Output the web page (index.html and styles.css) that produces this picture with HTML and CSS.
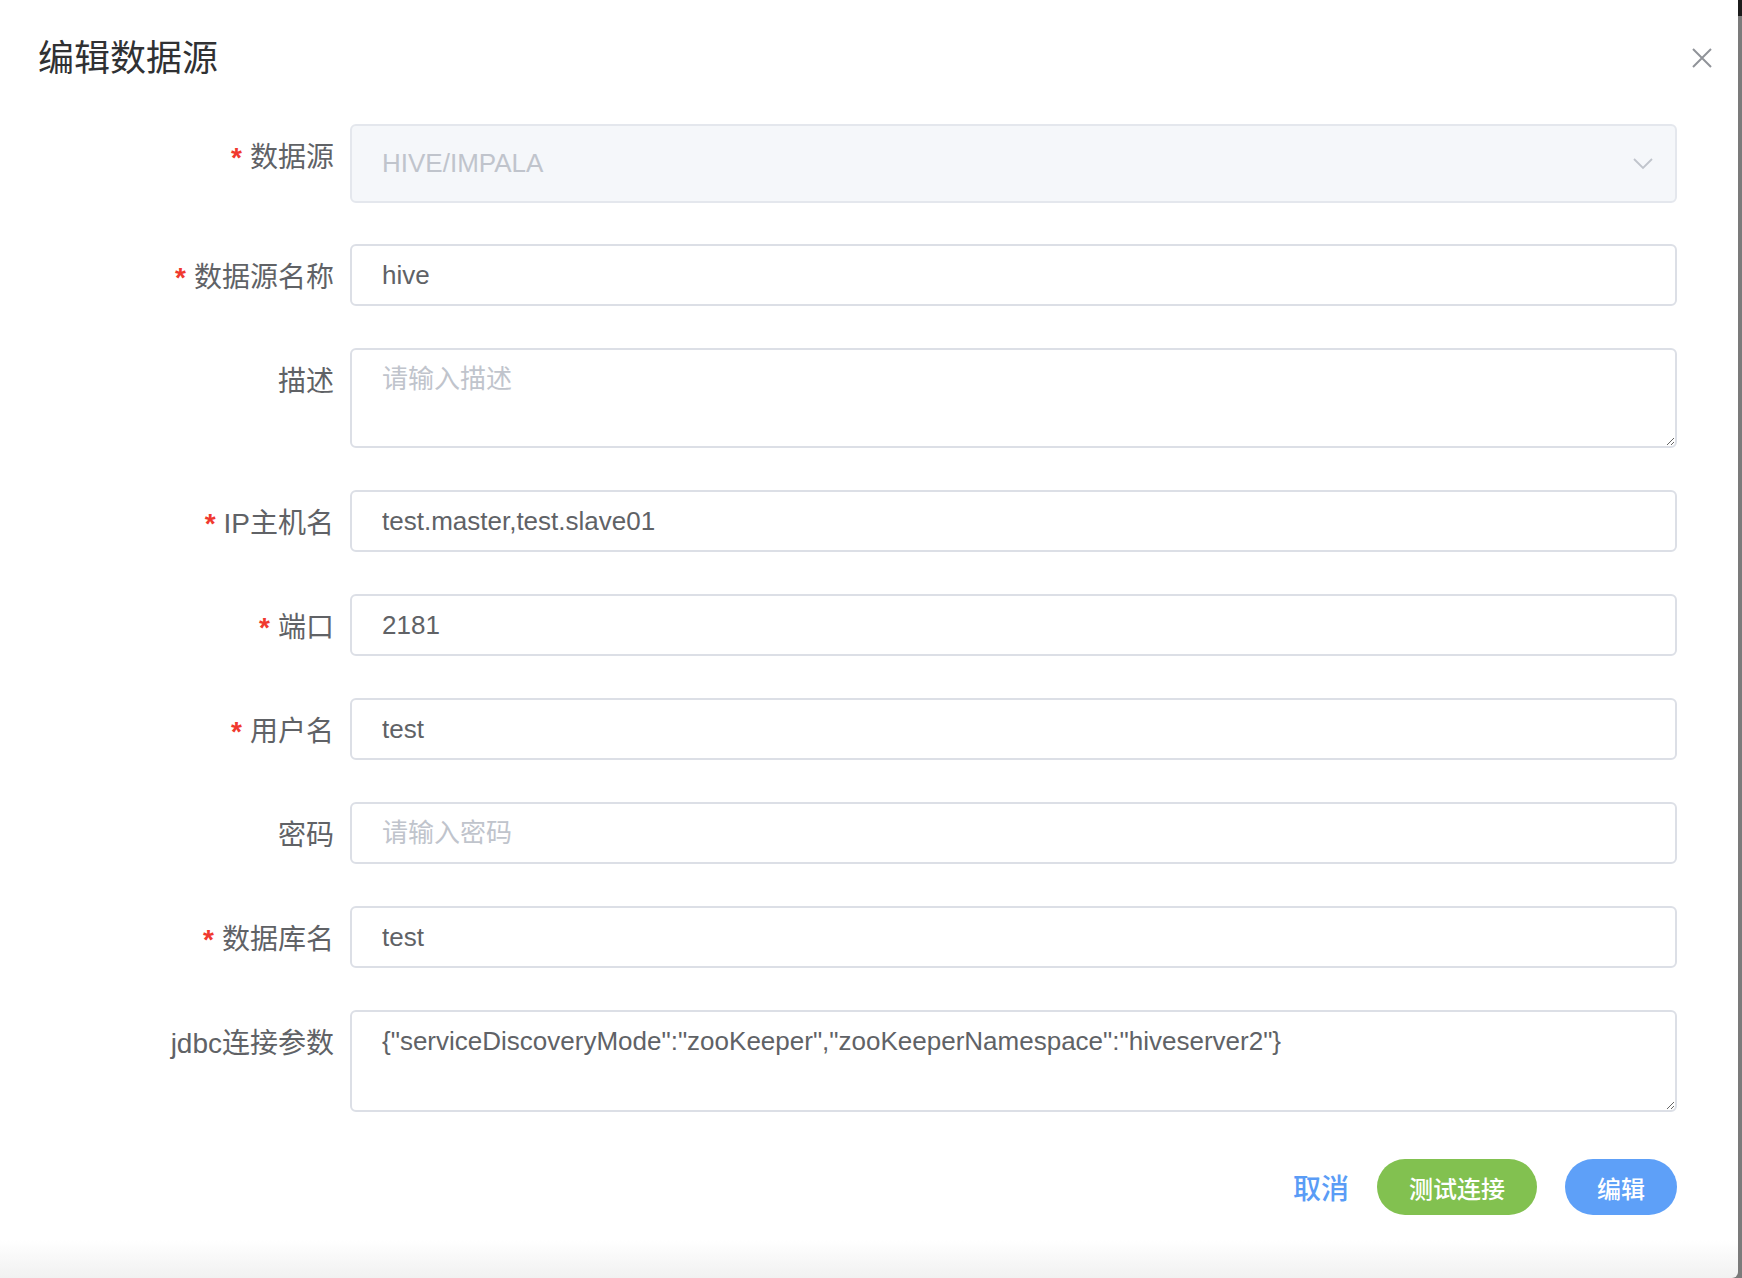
FILE: index.html
```html
<!DOCTYPE html>
<html lang="zh-CN">
<head>
<meta charset="utf-8">
<title>编辑数据源</title>
<link rel="stylesheet" href="styles.css">
</head>
<body>
<div class="page">
  <div class="dialog">
    <div class="dialog-header">
      <span class="dialog-title">编辑数据源</span>
      <button class="dialog-close" type="button" aria-label="关闭">
        <svg viewBox="0 0 20 20" width="20" height="20"><path d="M1 1 L19 19 M19 1 L1 19" fill="none" stroke="#909399" stroke-width="2"/></svg>
      </button>
    </div>
    <form class="form">
      <div class="form-item is-required">
        <label class="form-label">数据源</label>
        <div class="form-content">
          <div class="select is-disabled">
            <span class="select-value">HIVE/IMPALA</span>
            <svg class="select-arrow" viewBox="0 0 20 12" width="20" height="12"><path d="M1 1 L10 10 L19 1" fill="none" stroke="#c0c4cc" stroke-width="1.8"/></svg>
          </div>
        </div>
      </div>
      <div class="form-item is-required">
        <label class="form-label">数据源名称</label>
        <div class="form-content"><input class="input" type="text" value="hive"></div>
      </div>
      <div class="form-item">
        <label class="form-label">描述</label>
        <div class="form-content"><textarea class="textarea textarea-desc" placeholder="请输入描述"></textarea></div>
      </div>
      <div class="form-item is-required">
        <label class="form-label">IP主机名</label>
        <div class="form-content"><input class="input" type="text" value="test.master,test.slave01"></div>
      </div>
      <div class="form-item is-required">
        <label class="form-label">端口</label>
        <div class="form-content"><input class="input" type="text" value="2181"></div>
      </div>
      <div class="form-item is-required">
        <label class="form-label">用户名</label>
        <div class="form-content"><input class="input" type="text" value="test"></div>
      </div>
      <div class="form-item">
        <label class="form-label">密码</label>
        <div class="form-content"><input class="input" type="text" placeholder="请输入密码"></div>
      </div>
      <div class="form-item is-required">
        <label class="form-label">数据库名</label>
        <div class="form-content"><input class="input" type="text" value="test"></div>
      </div>
      <div class="form-item">
        <label class="form-label">jdbc连接参数</label>
        <div class="form-content"><textarea class="textarea">{"serviceDiscoveryMode":"zooKeeper","zooKeeperNamespace":"hiveserver2"}</textarea></div>
      </div>
    </form>
    <div class="dialog-footer">
      <button class="btn btn-text" type="button">取消</button>
      <button class="btn btn-success" type="button">测试连接</button>
      <button class="btn btn-primary" type="button">编辑</button>
    </div>
  </div>
</div>
</body>
</html>
```
FILE: styles.css
```css
* { box-sizing: border-box; }

html, body {
  margin: 0;
  padding: 0;
}

body {
  font-family: "Liberation Sans", "Noto Sans CJK SC", sans-serif;
  color: #606266;
  background: linear-gradient(to bottom, #1c1c1c 0, #1c1c1c 16px, #7b7b7b 16px, #7b7b7b 100%);
}

.page {
  width: 1742px;
  height: 1278px;
  display: flex;
  overflow: hidden;
}

.dialog {
  width: 1738px;
  height: 1278px;
  background: linear-gradient(to bottom, #ffffff 0, #ffffff calc(100% - 38px), #f1f1f1 100%);
  border-bottom-right-radius: 6px;
  padding: 0 61px 0 0;
  position: relative;
}

.dialog-header {
  padding: 41px 0 0 38px;
  height: 124px;
}

.dialog-title {
  font-size: 36px;
  line-height: 36px;
  color: #303133;
  display: block;
}

.dialog-close {
  position: absolute;
  left: 1692px;
  top: 48px;
  width: 20px;
  height: 20px;
  padding: 0;
  border: 0;
  background: transparent;
  display: block;
}

.dialog-close svg { display: block; }

.form {
  display: flex;
  flex-direction: column;
  gap: 42px;
}

.form-item {
  display: flex;
  align-items: flex-start;
}

.form-label {
  width: 350px;
  height: 62px;
  flex: none;
  padding: 3px 16px 0 0;
  text-align: right;
  font-size: 28px;
  line-height: 62px;
  color: #606266;
  white-space: nowrap;
}

.is-required .form-label::before {
  content: "*";
  color: #f0392e;
  font-weight: 700;
  margin-right: 8px;
}

.form-content {
  flex: 1;
  min-width: 0;
}

.input,
.textarea {
  display: block;
  width: 100%;
  font-family: "Liberation Sans", "Noto Sans CJK SC", sans-serif;
  font-size: 26px;
  color: #606266;
  background: #ffffff;
  border: 2px solid #dcdfe6;
  border-radius: 6px;
  outline: none;
  margin: 0;
}

.input {
  height: 62px;
  padding: 0 30px;
}

.textarea {
  height: 102px;
  padding: 10px 30px;
  line-height: 39px;
  resize: vertical;
}

.textarea-desc {
  height: 100px;
}

.input::placeholder,
.textarea::placeholder {
  color: #c0c4cc;
}

.select {
  height: 79px;
  margin-bottom: -1px;
  display: flex;
  align-items: center;
  justify-content: space-between;
  padding: 0 22px 0 30px;
  border: 2px solid #e4e7ed;
  border-radius: 6px;
  background: #f5f7fa;
}

.select-value {
  font-size: 26px;
  color: #c0c4cc;
}

.select-arrow { display: block; }

.dialog-footer {
  display: flex;
  justify-content: flex-end;
  align-items: center;
  margin-top: 47px;
}

.btn {
  font-family: "Liberation Sans", "Noto Sans CJK SC", sans-serif;
  border: 0;
  margin: 0;
  cursor: pointer;
}

.btn-text {
  background: transparent;
  padding: 0;
  font-size: 28px;
  font-weight: 500;
  color: #5a9cf6;
  margin-right: 28px;
}

.btn-success,
.btn-primary {
  height: 56px;
  border-radius: 28px;
  padding: 0 32px;
  font-size: 24px;
  font-weight: 500;
  color: #ffffff;
}

.btn-success {
  background: #82c150;
  margin-right: 28px;
}

.btn-primary {
  background: #5ea0f8;
}
```
